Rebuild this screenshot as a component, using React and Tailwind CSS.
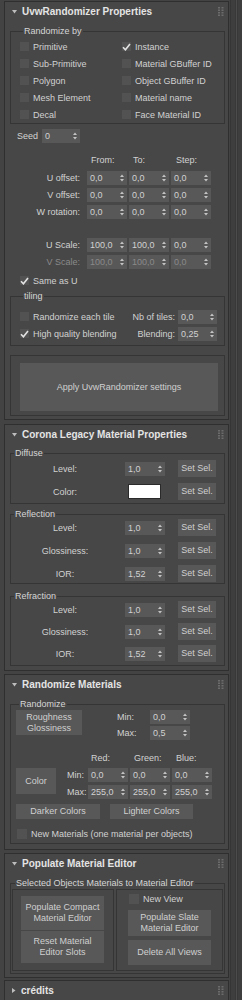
import React from "react";

function Arrows() {
  return (
    <svg width="4" height="8" viewBox="0 0 4 8" className="shrink-0">
      <path d="M0 3 L2 0.5 L4 3 Z M0 5 L2 7.5 L4 5 Z" fill="#c4c4c4" />
    </svg>
  );
}

function Spin({ v, w = "w-[40px]", dim = false }) {
  return (
    <div
      className={`${w} h-[14px] shrink-0 bg-[#585858] flex items-center justify-between pl-[3px] pr-[3px] ${
        dim ? "text-[#8a8a8a]" : "text-[#d2d2d2]"
      }`}
    >
      <span>{v}</span>
      <Arrows />
    </div>
  );
}

function Check({ on = false }) {
  return (
    <span className="w-[9px] h-[9px] shrink-0 bg-[#525252] flex items-center justify-center">
      {on && (
        <svg width="9" height="8" viewBox="0 0 9 8">
          <path d="M1 4.2 L3.4 6.8 L8 1" stroke="#e2e2e2" strokeWidth="1.6" fill="none" />
        </svg>
      )}
    </span>
  );
}

function Btn({ className = "", children }) {
  return (
    <div
      className={`shrink-0 bg-[#585858] text-[#d0d0d0] flex items-center justify-center text-center leading-[11px] ${className}`}
    >
      {children}
    </div>
  );
}

function Group({ label, className = "", children }) {
  return (
    <fieldset className={`border border-[#353535] min-w-0 ${className}`}>
      {label && (
        <legend className="ml-[3px] px-[1px] leading-[10px] text-[#d6d6d6]">{label}</legend>
      )}
      {children}
    </fieldset>
  );
}

function Grip() {
  return (
    <svg width="6" height="10" viewBox="0 0 6 10" className="ml-auto">
      {[0, 2.5, 5, 7.5].map((y) => (
        <g key={y} fill="#6c6c6c">
          <rect x="0" y={y} width="2" height="1.5" />
          <rect x="3.5" y={y} width="2" height="1.5" />
        </g>
      ))}
    </svg>
  );
}

function Rollout({ title, open = true, className = "", children }) {
  return (
    <section className={`ml-[4px] w-[225px] border border-[#2f2f2f] bg-[#474747] ${className}`}>
      <div className="h-[19px] flex items-center pl-[7px] pr-[4px]">
        {open ? (
          <svg width="5" height="4" viewBox="0 0 5 4">
            <path d="M0 0 L5 0 L2.5 3.5 Z" fill="#bdbdbd" />
          </svg>
        ) : (
          <svg width="4" height="5" viewBox="0 0 4 5">
            <path d="M0 0 L3.5 2.5 L0 5 Z" fill="#bdbdbd" />
          </svg>
        )}
        <span className="ml-[5px] text-[10px] font-bold text-[#e4e4e4]">{title}</span>
        <Grip />
      </div>
      {children}
    </section>
  );
}

const RAND_BY = [
  ["Primitive", false, "Instance", true],
  ["Sub-Primitive", false, "Material GBuffer ID", false],
  ["Polygon", false, "Object GBuffer ID", false],
  ["Mesh Element", false, "Material name", false],
  ["Decal", false, "Face Material ID", false],
];

function OffsetRow({ label, vals, dim = false }) {
  return (
    <div className="h-[17px] flex items-center">
      <span className={`w-[70px] text-right ${dim ? "text-[#8a8a8a]" : ""}`}>{label}</span>
      <div className="ml-[7px] flex gap-[2px]">
        {vals.map((v, i) => (
          <Spin key={i} v={v} dim={dim} />
        ))}
      </div>
    </div>
  );
}

function PropRow({ label, className = "", swatch = false, v }) {
  return (
    <div className={`h-[17px] flex items-center ${className}`}>
      <span className="ml-[19px] w-[70px] text-center">{label}</span>
      {swatch ? (
        <div className="ml-[28px] w-[33px] h-[15px] bg-white border border-[#2a2a2a]" />
      ) : (
        <div className="ml-[25px]">
          <Spin v={v} />
        </div>
      )}
      <Btn className={`w-[38px] h-[17px] ${swatch ? "ml-[17px]" : "ml-[13px]"}`}>Set Sel.</Btn>
    </div>
  );
}

export default function App() {
  return (
    <div className="w-[242px] h-[1000px] overflow-hidden bg-[#434343] flex font-['Liberation_Sans',Arial,sans-serif] text-[9px] leading-[10px] text-[#d2d2d2]">
      <div className="w-[230px] pt-[1px]">
        {/* UvwRandomizer */}
        <Rollout title="UvwRandomizer Properties">
          <div className="pt-[5px] pb-[3px] pl-[5px] pr-[3px]">
            <Group label="Randomize by" className="pt-[2px] pl-[9px]">
              <div className="grid grid-cols-[102px_1fr]">
                {RAND_BY.map(([a, ac, b, bc]) => (
                  <React.Fragment key={a}>
                    <div className="h-[17px] flex items-center gap-[4px]">
                      <Check on={ac} />
                      <span>{a}</span>
                    </div>
                    <div className="h-[17px] flex items-center gap-[4px]">
                      <Check on={bc} />
                      <span>{b}</span>
                    </div>
                  </React.Fragment>
                ))}
              </div>
            </Group>

            <div className="mt-[5px] h-[14px] flex items-center pl-[7px] gap-[4px]">
              <span>Seed</span>
              <Spin v="0" w="w-[38px]" />
            </div>

            <div className="mt-[11px] h-[12px] flex items-center ml-[77px] gap-[2px]">
              <span className="w-[40px] pl-[4px]">From:</span>
              <span className="w-[40px] pl-[4px]">To:</span>
              <span className="w-[40px] pl-[5px]">Step:</span>
            </div>
            <div className="mt-[3px]">
              <OffsetRow label="U offset:" vals={["0,0", "0,0", "0,0"]} />
              <OffsetRow label="V offset:" vals={["0,0", "0,0", "0,0"]} />
              <OffsetRow label="W rotation:" vals={["0,0", "0,0", "0,0"]} />
            </div>
            <div className="mt-[16px]">
              <OffsetRow label="U Scale:" vals={["100,0", "100,0", "0,0"]} />
              <OffsetRow label="V Scale:" vals={["100,0", "100,0", "0,0"]} dim />
            </div>
            <div className="mt-[2px] h-[17px] flex items-center pl-[10px] gap-[4px]">
              <Check on />
              <span>Same as U</span>
            </div>

            <Group label="tiling" className="mt-[2px] pt-[7px] pb-[3px] pl-[9px] pr-[7px]">
              <div className="h-[17px] flex items-center">
                <Check />
                <span className="ml-[4px]">Randomize each tile</span>
                <span className="ml-auto mr-[3px]">Nb of tiles:</span>
                <Spin v="0,0" w="w-[39px]" />
              </div>
              <div className="h-[17px] flex items-center">
                <Check on />
                <span className="ml-[4px]">High quality blending</span>
                <span className="ml-auto mr-[3px]">Blending:</span>
                <Spin v="0,25" w="w-[39px]" />
              </div>
            </Group>

            <div className="mt-[9px] border border-[#353535] pt-[7px] pb-[4px] pl-[9px] pr-[6px]">
              <Btn className="w-full h-[48px] bg-[#545454]">Apply UvwRandomizer settings</Btn>
            </div>
          </div>
        </Rollout>

        {/* Corona Legacy */}
        <Rollout title="Corona Legacy Material Properties" className="mt-[4px]">
          <div className="pt-[4px] pb-[4px] pl-[5px] pr-[3px]">
            <Group label="Diffuse" className="pb-[3px]">
              <PropRow label="Level:" v="1,0" className="mt-[2px]" />
              <PropRow label="Color:" swatch className="mt-[6px]" />
            </Group>
            <Group label="Reflection" className="mt-[5px] pb-[1px]">
              <PropRow label="Level:" v="1,0" />
              <PropRow label="Glossiness:" v="1,0" className="mt-[6px]" />
              <PropRow label="IOR:" v="1,52" className="mt-[6px]" />
            </Group>
            <Group label="Refraction" className="mt-[7px] pb-[3px]">
              <PropRow label="Level:" v="1,0" />
              <PropRow label="Glossiness:" v="1,0" className="mt-[5px]" />
              <PropRow label="IOR:" v="1,52" className="mt-[5px]" />
            </Group>
          </div>
        </Rollout>

        {/* Randomize Materials */}
        <Rollout title="Randomize Materials" className="mt-[3px]">
          <div className="pt-[5px] pb-[5px] pl-[5px] pr-[3px]">
            <Group label="Randomize" className="pl-[5px] pb-[1px]">
              <div className="flex">
                <Btn className="mt-[1px] w-[66px] h-[25px] flex-col">
                  <span>Roughness</span>
                  <span>Glossiness</span>
                </Btn>
                <div className="ml-[35px]">
                  <div className="h-[16px] flex items-center">
                    <span className="w-[33px]">Min:</span>
                    <Spin v="0,0" />
                  </div>
                  <div className="h-[16px] flex items-center">
                    <span className="w-[33px]">Max:</span>
                    <Spin v="0,5" />
                  </div>
                </div>
              </div>

              <div className="mt-[11px] h-[12px] flex items-center ml-[71px] gap-[2px]">
                <span className="w-[40px] pl-[4px]">Red:</span>
                <span className="w-[40px] pl-[5px]">Green:</span>
                <span className="w-[40px] pl-[5px]">Blue:</span>
              </div>
              <div className="mt-[2px] flex">
                <Btn className="mt-[2px] w-[40px] h-[26px]">Color</Btn>
                <div className="ml-[11px]">
                  {[
                    ["Min:", ["0,0", "0,0", "0,0"]],
                    ["Max:", ["255,0", "255,0", "255,0"]],
                  ].map(([l, vals]) => (
                    <div key={l} className="h-[17px] flex items-center">
                      <span className="w-[21px]">{l}</span>
                      <div className="flex gap-[2px]">
                        {vals.map((v, i) => (
                          <Spin key={i} v={v} />
                        ))}
                      </div>
                    </div>
                  ))}
                </div>
              </div>
              <div className="mt-[4px] flex">
                <Btn className="w-[84px] h-[15px]">Darker Colors</Btn>
                <Btn className="ml-[10px] w-[83px] h-[15px]">Lighter Colors</Btn>
              </div>
              <div className="mt-[7px] h-[16px] flex items-center pl-[1px] gap-[4px]">
                <span className="w-[10px] h-[10px] bg-[#525252]" />
                <span>New Materials (one material per objects)</span>
              </div>
            </Group>
          </div>
        </Rollout>

        {/* Populate Material Editor */}
        <Rollout title="Populate Material Editor" className="mt-[3px]">
          <div className="pt-[5px] pb-[3px] pl-[5px] pr-[3px]">
            <Group
              label="Selected Objects Materials to Material Editor"
              className="pt-[1px] pb-[2px] px-[1px]"
            >
              <div className="flex gap-[2px]">
                <div className="w-[102px] border border-[#353535] pt-[6px] pb-[5px] pl-[8px]">
                  <Btn className="w-[83px] h-[34px] flex-col">
                    <span>Populate Compact</span>
                    <span>Material Editor</span>
                  </Btn>
                  <Btn className="mt-[1px] w-[83px] h-[32px] flex-col">
                    <span>Reset Material</span>
                    <span>Editor Slots</span>
                  </Btn>
                </div>
                <div className="flex-1 border border-[#353535] pt-[3px] pb-[5px] pl-[11px]">
                  <div className="h-[12px] flex items-center pl-[1px] gap-[4px]">
                    <span className="w-[10px] h-[10px] bg-[#525252]" />
                    <span>New View</span>
                  </div>
                  <Btn className="mt-[5px] w-[83px] h-[26px] flex-col">
                    <span>Populate Slate</span>
                    <span>Material Editor</span>
                  </Btn>
                  <Btn className="mt-[4px] w-[83px] h-[25px]">Delete All Views</Btn>
                </div>
              </div>
            </Group>
          </div>
        </Rollout>

        <Rollout title="crédits" open={false} className="mt-[2px]" />
      </div>

      {/* scrollbar */}
      <div className="w-[12px] h-full border-l border-[#353535] bg-[#3e3e3e] flex justify-center">
        <div className="w-[3px] h-full bg-[#4c4c4c] border-x border-[#383838]" />
      </div>
    </div>
  );
}
